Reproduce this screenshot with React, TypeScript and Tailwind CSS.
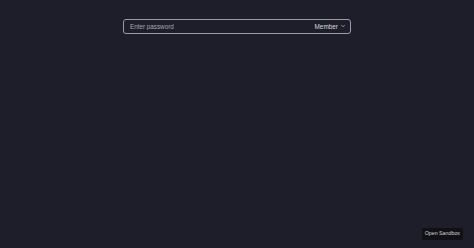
import { ChevronDown } from "lucide-react";

function App() {
	return (
		<div className="relative w-screen h-screen bg-[#1e1d2a] overflow-hidden" style={{ fontFamily: '"Liberation Sans", Arial, sans-serif' }}>
			<div className="flex justify-center pt-[19px]">
				<div className="flex items-center w-[228px] h-[15px] border border-[#9b9ba5] rounded-[3px] pl-[6px] pr-[4px]">
					<input
						placeholder="Enter password"
						className="flex-1 min-w-0 bg-transparent outline-none text-[6.3px] text-[#d4d4d8] placeholder:text-[#a8a8b0]"
					/>
					<button className="flex items-center gap-[2px] text-[6.4px] text-[#d8d8dc]">
						Member
						<ChevronDown className="w-[6px] h-[6px]" strokeWidth={2.5} />
					</button>
				</div>
			</div>
			<button className="absolute right-[11px] bottom-[8px] px-[3px] h-[12px] bg-[#111115] rounded-[2px] text-[5.3px] text-[#d4d4d8]">
				Open Sandbox
			</button>
		</div>
	);
}

export default App;
